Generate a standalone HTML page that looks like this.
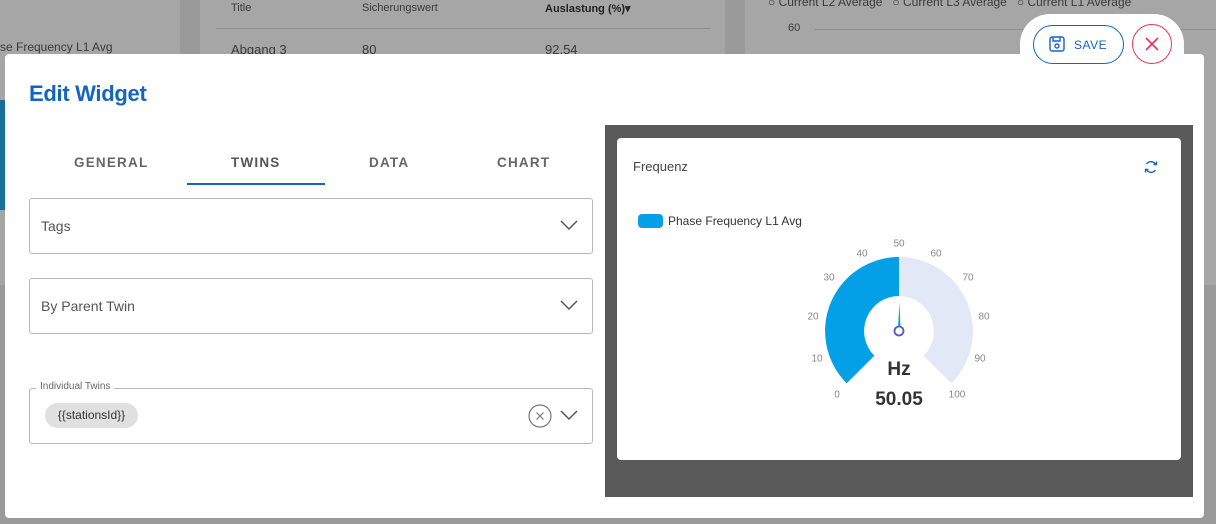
<!DOCTYPE html>
<html><head><style>
*{margin:0;padding:0;box-sizing:border-box}
body{width:1216px;height:524px;overflow:hidden;position:relative;background:#9a9a9a;font-family:"Liberation Sans",Arial,sans-serif}
.abs{position:absolute}
.bgtxt{color:#3a3a3a;font-size:12px}
.field{position:absolute;left:29px;width:564px;height:56px;border:1px solid #b9b9b9;border-radius:3px;background:#fff}
.field .lbl{position:absolute;left:11px;top:19px;font-size:14px;color:#555}
.chev{position:absolute;right:14px;top:20px}
.tab{position:absolute;top:155px;font-size:13.5px;letter-spacing:1.2px;color:#666;font-weight:bold;}
</style></head><body>
<div class="abs" style="left:0;top:0;width:180px;height:285px;background:#a6a6a6"></div>
<div class="abs" style="left:200px;top:0;width:525px;height:285px;background:#a6a6a6"></div>
<div class="abs" style="left:745px;top:0;width:471px;height:285px;background:#a6a6a6"></div>
<div class="abs" style="left:0;top:100px;width:5px;height:110px;background:#1a6f9a"></div>
<div class="abs bgtxt" style="left:0;top:40px">se Frequency L1 Avg</div>
<div class="abs bgtxt" style="left:231px;top:2px;font-size:11px">Title</div>
<div class="abs bgtxt" style="left:362px;top:2px;font-size:11px">Sicherungswert</div>
<div class="abs bgtxt" style="left:545px;top:2px;font-size:11px;font-weight:bold;color:#222">Auslastung (%)▾</div>
<div class="abs" style="left:216px;top:28px;width:494px;height:1px;background:#8f8f8f"></div>
<div class="abs bgtxt" style="left:231px;top:42px;font-size:13px">Abgang 3</div>
<div class="abs bgtxt" style="left:362px;top:42px;font-size:13px">80</div>
<div class="abs bgtxt" style="left:545px;top:42px;font-size:13px">92.54</div>
<div class="abs bgtxt" style="left:768px;top:-5px;font-size:12px">○ Current L2 Average &nbsp; ○ Current L3 Average &nbsp; ○ Current L1 Average</div>
<div class="abs bgtxt" style="left:788px;top:22px;font-size:11px">60</div>
<div class="abs" style="left:815px;top:29px;width:401px;height:1px;background:#909090"></div>
<!-- modal -->
<div class="abs" style="left:5px;top:54px;width:1199px;height:464px;background:#fff;border-radius:4px"></div>
<!-- save bubble -->
<div class="abs" style="left:1020px;top:14px;width:164px;height:60px;background:#fff;border-radius:30px 30px 0 0"></div>
<div class="abs" style="left:1033px;top:25px;width:91px;height:39px;border:1.3px solid #1565c0;border-radius:20px;color:#1565c0;font-size:12px;letter-spacing:.5px;background:#fff">
<svg class="abs" style="left:14px;top:9px" width="18" height="18" viewBox="0 0 18 18" fill="none" stroke="#1565c0" stroke-width="1.4"><rect x="2" y="2" width="14" height="14" rx="2"/><path d="M5 2v4h7V2"/><circle cx="9" cy="11" r="2"/></svg>
<span class="abs" style="left:40px;top:12px">SAVE</span></div>
<div class="abs" style="left:1132px;top:24px;width:40px;height:40px;border:1.3px solid #f0325a;border-radius:50%;background:#fff">
<svg class="abs" style="left:11px;top:11px" width="16" height="16" viewBox="0 0 16 16" stroke="#f0325a" stroke-width="1.6"><path d="M2 2L14 14M14 2L2 14"/></svg></div>
<div class="abs" style="left:29px;top:81px;font-size:22px;color:#1565c0;font-weight:bold;letter-spacing:-0.3px">Edit Widget</div>
<div class="tab" style="left:74px">GENERAL</div>
<div class="tab" style="left:231px;color:#555">TWINS</div>
<div class="tab" style="left:369px">DATA</div>
<div class="tab" style="left:497px">CHART</div>
<div class="abs" style="left:187px;top:183px;width:138px;height:2px;background:#1565c0"></div>
<div class="field" style="top:198px"><span class="lbl">Tags</span><svg class="chev" width="18" height="12" viewBox="0 0 18 12" fill="none" stroke="#555" stroke-width="1.5"><path d="M1 2l8 8 8-8"/></svg></div>
<div class="field" style="top:278px"><span class="lbl">By Parent Twin</span><svg class="chev" width="18" height="12" viewBox="0 0 18 12" fill="none" stroke="#555" stroke-width="1.5"><path d="M1 2l8 8 8-8"/></svg></div>
<div class="field" style="top:388px"><svg class="chev" width="18" height="12" viewBox="0 0 18 12" fill="none" stroke="#555" stroke-width="1.5"><path d="M1 2l8 8 8-8"/></svg>
<div class="abs" style="left:6px;top:-8px;background:#fff;padding:0 4px;font-size:10px;color:#666">Individual Twins</div>
<div class="abs" style="left:15px;top:14px;width:93px;height:25px;border-radius:13px;background:#e0e0e0;font-size:12px;color:#333;text-align:center;line-height:25px">{{stationsId}}</div>
<svg class="abs" style="left:498px;top:15px" width="24" height="24" viewBox="0 0 24 24" fill="none" stroke="#777" stroke-width="1.2"><circle cx="12" cy="12" r="11"/><path d="M8.5 8.5l7 7M15.5 8.5l-7 7"/></svg>
</div>
<div class="abs" style="left:605px;top:125px;width:588px;height:372px;background:#595959"></div>
<div class="abs" style="left:617px;top:138px;width:564px;height:322px;background:#fff;border-radius:4px"></div>
<div class="abs" style="left:633px;top:159px;font-size:13px;color:#444">Frequenz</div>
<svg class="abs" style="left:1143px;top:159px" width="16" height="16" viewBox="0 0 16 16" fill="none" stroke="#1565c0" stroke-width="1.4"><path d="M13 6A5.5 5.5 0 0 0 3.5 5"/><path d="M3 10a5.5 5.5 0 0 0 9.5 1"/><path d="M10.5 5.5H13.5V2.5" /><path d="M5.5 10.5H2.5V13.5"/></svg>
<div class="abs" style="left:638px;top:214px;width:25px;height:14px;border-radius:4px;background:#03a0e8"></div>
<div class="abs" style="left:668px;top:214px;font-size:12px;color:#333">Phase Frequency L1 Avg</div>
<svg class="abs" style="left:0;top:0" width="1216" height="524" font-family="Liberation Sans,Arial,sans-serif">
<path d="M846.7 383.3A74 74 0 0 1 899 257L899 296A35 35 0 0 0 874.3 355.7Z" fill="#03a0e8"/>
<path d="M899 257A74 74 0 0 1 951.3 383.3L923.7 355.7A35 35 0 0 0 899 296Z" fill="#e2e8f5"/>
<path d="M898 328L899.5 302L900.5 328Z" fill="#03a0e8"/>
<circle cx="899" cy="331" r="4.5" fill="#fff" stroke="#4a5fc1" stroke-width="1.8"/>
<g font-size="10" fill="#888" text-anchor="middle" dominant-baseline="central">
<text x="837" y="395">0</text><text x="817" y="359">10</text><text x="813" y="317">20</text><text x="829" y="278">30</text><text x="862" y="254">40</text><text x="899" y="244">50</text><text x="936" y="254">60</text><text x="968" y="278">70</text><text x="984" y="317">80</text><text x="980" y="359">90</text><text x="957" y="395">100</text>
</g>
<text x="899" y="375" font-size="19" font-weight="bold" fill="#333" text-anchor="middle">Hz</text>
<text x="899" y="405" font-size="19" font-weight="bold" fill="#333" text-anchor="middle">50.05</text>
</svg>
</body></html>
